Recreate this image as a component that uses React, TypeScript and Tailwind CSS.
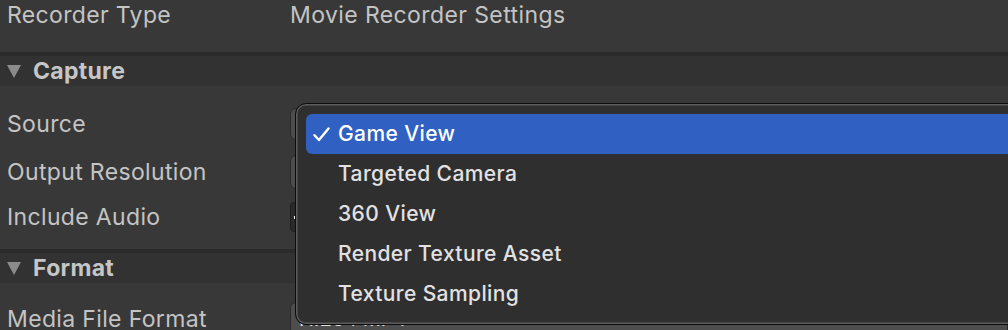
import React from "react";

const Tri = () => (
  <svg width="14" height="13" viewBox="0 0 14 13" className="shrink-0">
    <polygon points="0,0 14,0 7,13" fill="#8b8b8b" />
  </svg>
);

const Check = () => (
  <svg width="17" height="15" viewBox="0 0 17 15" className="shrink-0">
    <path d="M1.5 8.2 L6 13 L15.5 1.5" fill="none" stroke="#ffffff" strokeWidth="2.4" strokeLinecap="round" strokeLinejoin="round" />
  </svg>
);

const Label = ({ children, className = "" }: { children: React.ReactNode; className?: string }) => (
  <div className={`w-[290px] shrink-0 pl-[7px] text-[23px] tracking-[0.35px] text-[#c4c4c4] ${className}`}>{children}</div>
);

const Header = ({ title }: { title: string }) => (
  <div className="border-t-4 border-[#2b2b2b] bg-[#323232] h-[34px] flex items-center pl-[7px] gap-[12px]">
    <Tri />
    <span className="text-[23px] tracking-[0.3px] font-bold text-[#c6c6c6]">{title}</span>
  </div>
);

export default function App() {
  const items = ["Game View", "Targeted Camera", "360 View", "Render Texture Asset", "Texture Sampling"];
  return (
    <div className="relative w-[1008px] h-[330px] overflow-hidden bg-[#383838]" style={{ fontFamily: "Inter, 'Noto Sans', sans-serif" }}>
      <div className="flex flex-col">
        <div className="h-[30px] flex items-center">
          <Label>Recorder Type</Label>
          <span className="text-[23px] tracking-[0.4px] text-[#c4c4c4]">Movie Recorder Settings</span>
        </div>
        <div className="h-[22px]" />
        <Header title="Capture" />
        <div className="h-[22px]" />
        <div className="h-[32px] flex items-center">
          <Label>Source</Label>
          <div className="flex-1 h-[32px] rounded-[6px] bg-[#4d4d4d] border border-[#2a2a2a]" />
        </div>
        <div className="h-[15px]" />
        <div className="h-[34px] flex items-center">
          <Label>Output Resolution</Label>
          <div className="flex-1 h-[34px] rounded-[6px] bg-[#4d4d4d] border border-[#2a2a2a]" />
        </div>
        <div className="h-[13px]" />
        <div className="h-[30px] flex items-center">
          <Label>Include Audio</Label>
          <div className="w-[30px] h-[30px] rounded-[4px] bg-[#2a2a2a] border border-[#1e1e1e] flex items-center">
            <div className="w-[3px] h-[3px] bg-white ml-[3px]" />
          </div>
        </div>
        <div className="h-[17px]" />
        <Header title="Format" />
        <div className="h-[19px]" />
        <div className="h-[34px] flex items-center">
          <Label>Media File Format</Label>
          <div className="flex-1 h-[34px] rounded-[6px] bg-[#4d4d4d] border border-[#2a2a2a] flex items-center pl-[8px] text-[20px] text-[#e0e0e0]">H.264 MP4</div>
        </div>
      </div>

      <div className="absolute left-[295px] top-[103px] w-[740px] h-[222px] rounded-[11px] border border-[#0c0c0c] bg-[#2f2f30] shadow-[inset_0_0_0_1.5px_#5c5c5c] px-[10px] py-[10px]">
        {items.map((t, i) => (
          <div
            key={t}
            className={`h-[40px] flex items-center rounded-[6px] ${i === 0 ? "bg-[#3061c2] text-white" : "text-[#e2e2e2]"}`}
          >
            <div className="w-[32px] pl-[7px] flex items-center">{i === 0 ? <Check /> : null}</div>
            <span className="text-[21px] tracking-[0.4px] font-medium">{t}</span>
          </div>
        ))}
      </div>
    </div>
  );
}
